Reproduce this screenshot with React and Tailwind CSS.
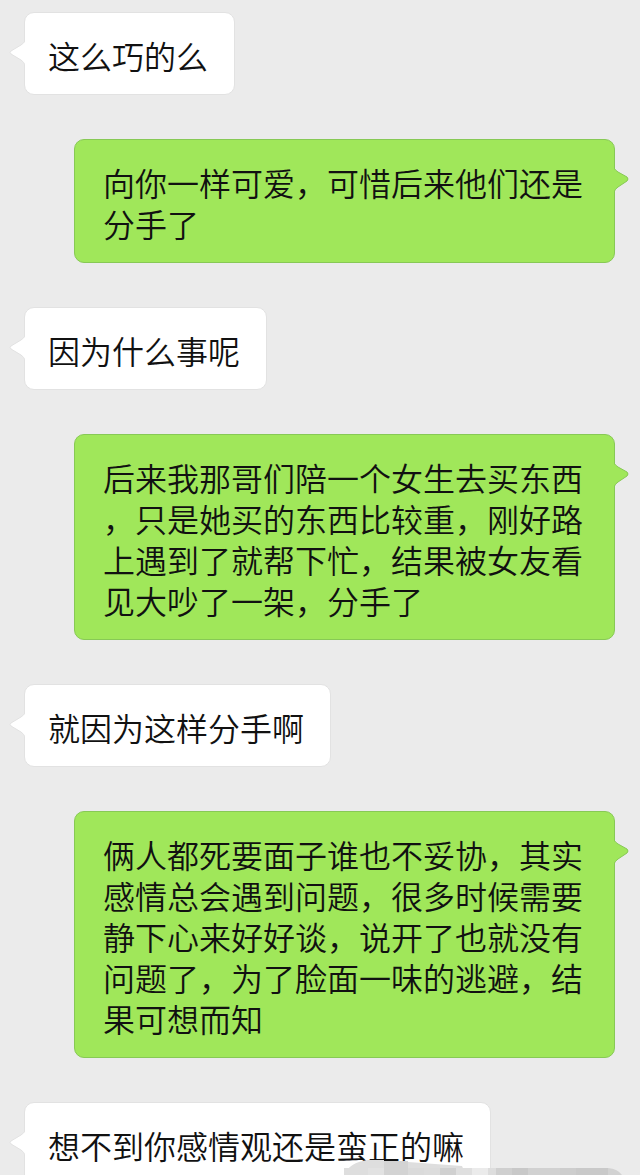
import clsx from 'clsx'

const MESSAGES = [
  { id: 1, mine: false, text: '这么巧的么' },
  { id: 2, mine: true, text: '向你一样可爱，可惜后来他们还是分手了' },
  { id: 3, mine: false, text: '因为什么事呢' },
  { id: 4, mine: true, text: '后来我那哥们陪一个女生去买东西，只是她买的东西比较重，刚好路上遇到了就帮下忙，结果被女友看见大吵了一架，分手了' },
  { id: 5, mine: false, text: '就因为这样分手啊' },
  { id: 6, mine: true, text: '俩人都死要面子谁也不妥协，其实感情总会遇到问题，很多时候需要静下心来好好谈，说开了也就没有问题了，为了脸面一味的逃避，结果可想而知' },
  { id: 7, mine: false, text: '想不到你感情观还是蛮正的嘛' },
]

const MOSAIC = [
  { x: 0, w: 24, fill: '#dedede' },
  { x: 24, w: 20, fill: '#e2e2e2' },
  { x: 40, w: 24, fill: '#d3d3d3' },
  { x: 64, w: 16, fill: '#dadada' },
  { x: 80, w: 16, fill: '#dcdcdc' },
  { x: 96, w: 16, fill: '#d0d0d0' },
  { x: 112, w: 16, fill: '#dfdfdf' },
  { x: 128, w: 16, fill: '#ebebeb' },
  { x: 144, w: 8, fill: '#dddddd' },
  { x: 152, w: 16, fill: '#cfcfcf' },
  { x: 168, w: 16, fill: '#c8c8c8' },
  { x: 184, w: 32, fill: '#d1d1d1' },
  { x: 216, w: 16, fill: '#cdcdcd' },
  { x: 232, w: 32, fill: '#c9c9c9' },
]

function Tail({ mine }) {
  if (mine) {
    return (
      <svg className="absolute top-7 left-full w-4 h-6" viewBox="0 0 16 24" aria-hidden="true">
        <path d="M0 0 Q1 2 4 4 L13 9 Q15 11 13 13 L4 19 Q1 21 0 24 Z" fill="#a0e75a" />
        <path d="M0 0 Q1 2 4 4 L13 9 Q15 11 13 13 L4 19 Q1 21 0 24" fill="none" stroke="#87c955" />
      </svg>
    )
  }
  return (
    <svg className="absolute top-7 right-full w-4 h-6" viewBox="0 0 16 24" aria-hidden="true">
      <path d="M16 0 Q15 2 12 4 L2 10 Q0 11 2 13 L12 19 Q15 21 16 24 Z" fill="#fff" />
      <path d="M16 0 Q15 2 12 4 L2 10 Q0 11 2 13 L12 19 Q15 21 16 24" fill="none" stroke="#e2e2e2" />
    </svg>
  )
}

function Bubble({ mine, text }) {
  return (
    <li className={clsx('flex', mine ? 'justify-end pl-[74px] pr-[25px]' : 'pl-6 pr-[74px]')}>
      <div
        className={clsx(
          'relative rounded-[10px] border pt-[22px] pb-[18px]',
          mine ? 'bg-[#a0e75a] border-[#87c955] px-7' : 'bg-white border-[#e2e2e2] pl-[23px] pr-[26px]'
        )}
      >
        <p className="[line-break:anywhere]">{text}</p>
        <Tail mine={mine} />
      </div>
    </li>
  )
}

export default function App() {
  return (
    <main
      lang="zh-CN"
      className="relative h-screen overflow-hidden bg-[#ebebeb] pt-3 text-[32px] leading-[41px] font-[350] text-[#111] font-['Noto_Sans_CJK_SC',sans-serif]"
    >
      <ul className="flex flex-col gap-11">
        {MESSAGES.map(m => (
          <Bubble key={m.id} mine={m.mine} text={m.text} />
        ))}
      </ul>

      {/* Mosaic strip over the bottom edge */}
      <svg className="absolute bottom-0 right-4 w-[280px] h-4" viewBox="0 0 280 16" aria-hidden="true">
        <path d="M0 16 Q6 3 24 1 H40 V9 H64 V3 L118 7 L122 16 Z" fill="#dedede" />
        <rect x={40} y={2} width={24} height={8} fill="#d3d3d3" />
        {MOSAIC.map(b => (
          <rect key={b.x} x={b.x} y={9} width={b.w} height={7} fill={b.fill} />
        ))}
        <path d="M264 9 Q274 10 278 16 H264 Z" fill="#d2d2d2" />
      </svg>
    </main>
  )
}
